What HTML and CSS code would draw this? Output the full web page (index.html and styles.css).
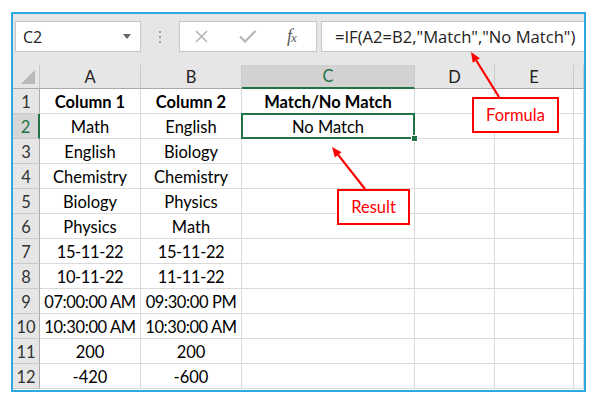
FILE: index.html
```html
<!DOCTYPE html>
<html>
<head>
<meta charset="utf-8">
<link rel="stylesheet" href="styles.css">
</head>
<body>
<div class="frame">
  <div class="toolbar">
    <div class="namebox"><span>C2</span><span class="caret"></span></div>
    <div class="grip"><i></i><i></i><i></i></div>
    <div class="iconbox">
      <svg class="ic-x" width="13" height="13" viewBox="0 0 13 13"><path d="M1 1L12 12M12 1L1 12" stroke="#b5b5b5" stroke-width="1.6" fill="none"/></svg>
      <svg class="ic-check" width="18" height="13" viewBox="0 0 18 13"><path d="M1 6.5L6 11.5L16.5 1" stroke="#b5b5b5" stroke-width="2.2" fill="none"/></svg>
      <span class="fx">f<small>x</small></span>
    </div>
    <div class="formula">=IF(A2=B2,"Match","No Match")</div>
  </div>
  <div class="sheet">
    <div class="cell hd corner"><div class="tri"></div></div>
    <div class="cell hd">A</div>
    <div class="cell hd">B</div>
    <div class="cell hd sel-col">C</div>
    <div class="cell hd">D</div>
    <div class="cell hd">E</div>
    <div class="cell hd"></div>

    <div class="cell rh">1</div>
    <div class="cell b">Column 1</div>
    <div class="cell b">Column 2</div>
    <div class="cell b">Match/No Match</div>
    <div class="cell"></div><div class="cell"></div><div class="cell"></div>

    <div class="cell rh sel-row">2</div>
    <div class="cell">Math</div>
    <div class="cell">English</div>
    <div class="cell active">No Match</div>
    <div class="cell"></div><div class="cell"></div><div class="cell"></div>

    <div class="cell rh">3</div>
    <div class="cell">English</div>
    <div class="cell">Biology</div>
    <div class="cell"></div><div class="cell"></div><div class="cell"></div><div class="cell"></div>

    <div class="cell rh">4</div>
    <div class="cell">Chemistry</div>
    <div class="cell">Chemistry</div>
    <div class="cell"></div><div class="cell"></div><div class="cell"></div><div class="cell"></div>

    <div class="cell rh">5</div>
    <div class="cell">Biology</div>
    <div class="cell">Physics</div>
    <div class="cell"></div><div class="cell"></div><div class="cell"></div><div class="cell"></div>

    <div class="cell rh">6</div>
    <div class="cell">Physics</div>
    <div class="cell">Math</div>
    <div class="cell"></div><div class="cell"></div><div class="cell"></div><div class="cell"></div>

    <div class="cell rh">7</div>
    <div class="cell t">15-11-22</div>
    <div class="cell t">15-11-22</div>
    <div class="cell"></div><div class="cell"></div><div class="cell"></div><div class="cell"></div>

    <div class="cell rh">8</div>
    <div class="cell t">10-11-22</div>
    <div class="cell t">11-11-22</div>
    <div class="cell"></div><div class="cell"></div><div class="cell"></div><div class="cell"></div>

    <div class="cell rh">9</div>
    <div class="cell t">07:00:00 AM</div>
    <div class="cell t">09:30:00 PM</div>
    <div class="cell"></div><div class="cell"></div><div class="cell"></div><div class="cell"></div>

    <div class="cell rh">10</div>
    <div class="cell t">10:30:00 AM</div>
    <div class="cell t">10:30:00 AM</div>
    <div class="cell"></div><div class="cell"></div><div class="cell"></div><div class="cell"></div>

    <div class="cell rh">11</div>
    <div class="cell">200</div>
    <div class="cell">200</div>
    <div class="cell"></div><div class="cell"></div><div class="cell"></div><div class="cell"></div>

    <div class="cell rh">12</div>
    <div class="cell">-420</div>
    <div class="cell">-600</div>
    <div class="cell"></div><div class="cell"></div><div class="cell"></div><div class="cell"></div>
  </div>
</div>

<svg class="arrows" width="593" height="402" viewBox="0 0 593 402">
  <line x1="499" y1="97" x2="476.3" y2="60.5" stroke="#ff0000" stroke-width="2.2"/>
  <polygon points="471,52 479.9,58.3 472.7,62.7" fill="#ff0000"/>
  <line x1="365" y1="189" x2="338.2" y2="154.9" stroke="#ff0000" stroke-width="2.2"/>
  <polygon points="332,147 341.5,152.3 334.9,157.5" fill="#ff0000"/>
</svg>
<div class="callout note-formula">Formula</div>
<div class="callout note-result">Result</div>
</body>
</html>
```
FILE: styles.css
```css
body {
  margin: 0;
  background: #fff;
  font-family: Lato, "Open Sans", sans-serif;
  width: 593px;
  height: 402px;
  position: relative;
  overflow: hidden;
}

.frame {
  box-sizing: border-box;
  width: 575px;
  height: 380px;
  margin: 12px 0 0 11px;
  border: 2px solid #2aa9e3;
  background: #fff;
  display: flex;
  flex-direction: column;
  overflow: hidden;
}

.toolbar {
  box-sizing: border-box;
  height: 51px;
  flex: none;
  background: #e6e6e6;
  display: flex;
  align-items: flex-start;
  padding: 7px 0 0 2px;
}

.namebox {
  box-sizing: border-box;
  width: 126px;
  height: 31px;
  background: #fff;
  border: 1px solid #c6c6c6;
  display: flex;
  align-items: center;
  justify-content: space-between;
  padding: 0 9px 0 7px;
  font-family: "Open Sans", sans-serif;
  font-size: 16px;
  color: #222;
}

.caret {
  width: 0;
  height: 0;
  border-left: 4px solid transparent;
  border-right: 4px solid transparent;
  border-top: 5px solid #666;
}

.grip {
  width: 38px;
  height: 31px;
  display: flex;
  flex-direction: column;
  align-items: center;
  justify-content: center;
  gap: 3px;
}

.grip i {
  display: block;
  width: 2px;
  height: 2px;
  background: #9e9e9e;
}

.iconbox {
  box-sizing: border-box;
  width: 138px;
  height: 31px;
  background: #fff;
  border: 1px solid #c6c6c6;
  display: flex;
  align-items: center;
}

.ic-x {
  margin-left: 15px;
}

.ic-check {
  margin-left: 31px;
}

.fx {
  margin-left: 30px;
  font-family: "Liberation Serif", serif;
  font-style: italic;
  font-size: 18px;
  color: #5a5a5a;
  letter-spacing: -1px;
}

.fx small {
  font-size: 13px;
}

.formula {
  flex: 1;
  margin-left: 4px;
  box-sizing: border-box;
  height: 31px;
  background: #fff;
  border: 1px solid #c6c6c6;
  border-right: none;
  font-family: "Open Sans", sans-serif;
  font-size: 16.6px;
  padding-left: 13px;
  line-height: 29px;
  white-space: nowrap;
  color: #222;
}

.sheet {
  display: grid;
  grid-template-columns: 27px 101px 101px 173px 80px 79px 1fr;
  grid-template-rows: 24px repeat(12, 25px);
}

.cell {
  box-sizing: border-box;
  border-right: 1px solid #dadada;
  border-bottom: 1px solid #dadada;
  display: flex;
  align-items: center;
  justify-content: center;
  font-size: 16.5px;
  padding-top: 1px;
  color: #000;
  white-space: nowrap;
  overflow: visible;
}

.cell.b {
  font-weight: bold;
}

.cell.t {
  letter-spacing: -0.4px;
}

.hd {
  background: #e6e6e6;
  border-right-color: #cacaca;
  border-bottom-color: #ababab;
  color: #222;
  padding-top: 0;
}

.corner {
  align-items: flex-end;
  justify-content: flex-end;
  padding: 0 4px 4px 0;
}

.tri {
  width: 14px;
  height: 14px;
  background: #b9b9b9;
  clip-path: polygon(100% 0, 100% 100%, 0 100%);
}

.rh {
  background: #e6e6e6;
  border-right-color: #ababab;
  border-bottom-color: #cacaca;
  color: #333;
}

.sel-col {
  background: #d2d2d2;
  border-bottom: 2px solid #217346;
  color: #217346;
}

.sel-row {
  background: #d6d6d6;
  border-right: 2px solid #217346;
  color: #217346;
}

.active {
  position: relative;
}

.active::after {
  content: "";
  position: absolute;
  left: -1px;
  top: -1px;
  right: -1px;
  bottom: -1px;
  border: 2px solid #217346;
}

.active::before {
  content: "";
  position: absolute;
  right: -4px;
  bottom: -4px;
  width: 5px;
  height: 5px;
  background: #217346;
  border: 1px solid #fff;
  z-index: 2;
}

.arrows {
  position: absolute;
  left: 0;
  top: 0;
  pointer-events: none;
  z-index: 5;
}

.callout {
  position: absolute;
  box-sizing: border-box;
  border: 2px solid #ff0000;
  background: #fff;
  color: #ff0000;
  font-size: 16.5px;
  display: flex;
  align-items: center;
  justify-content: center;
  z-index: 6;
}

.note-formula {
  left: 472px;
  top: 97px;
  width: 87px;
  height: 36px;
}

.note-result {
  left: 337px;
  top: 189px;
  width: 73px;
  height: 36px;
}
```
